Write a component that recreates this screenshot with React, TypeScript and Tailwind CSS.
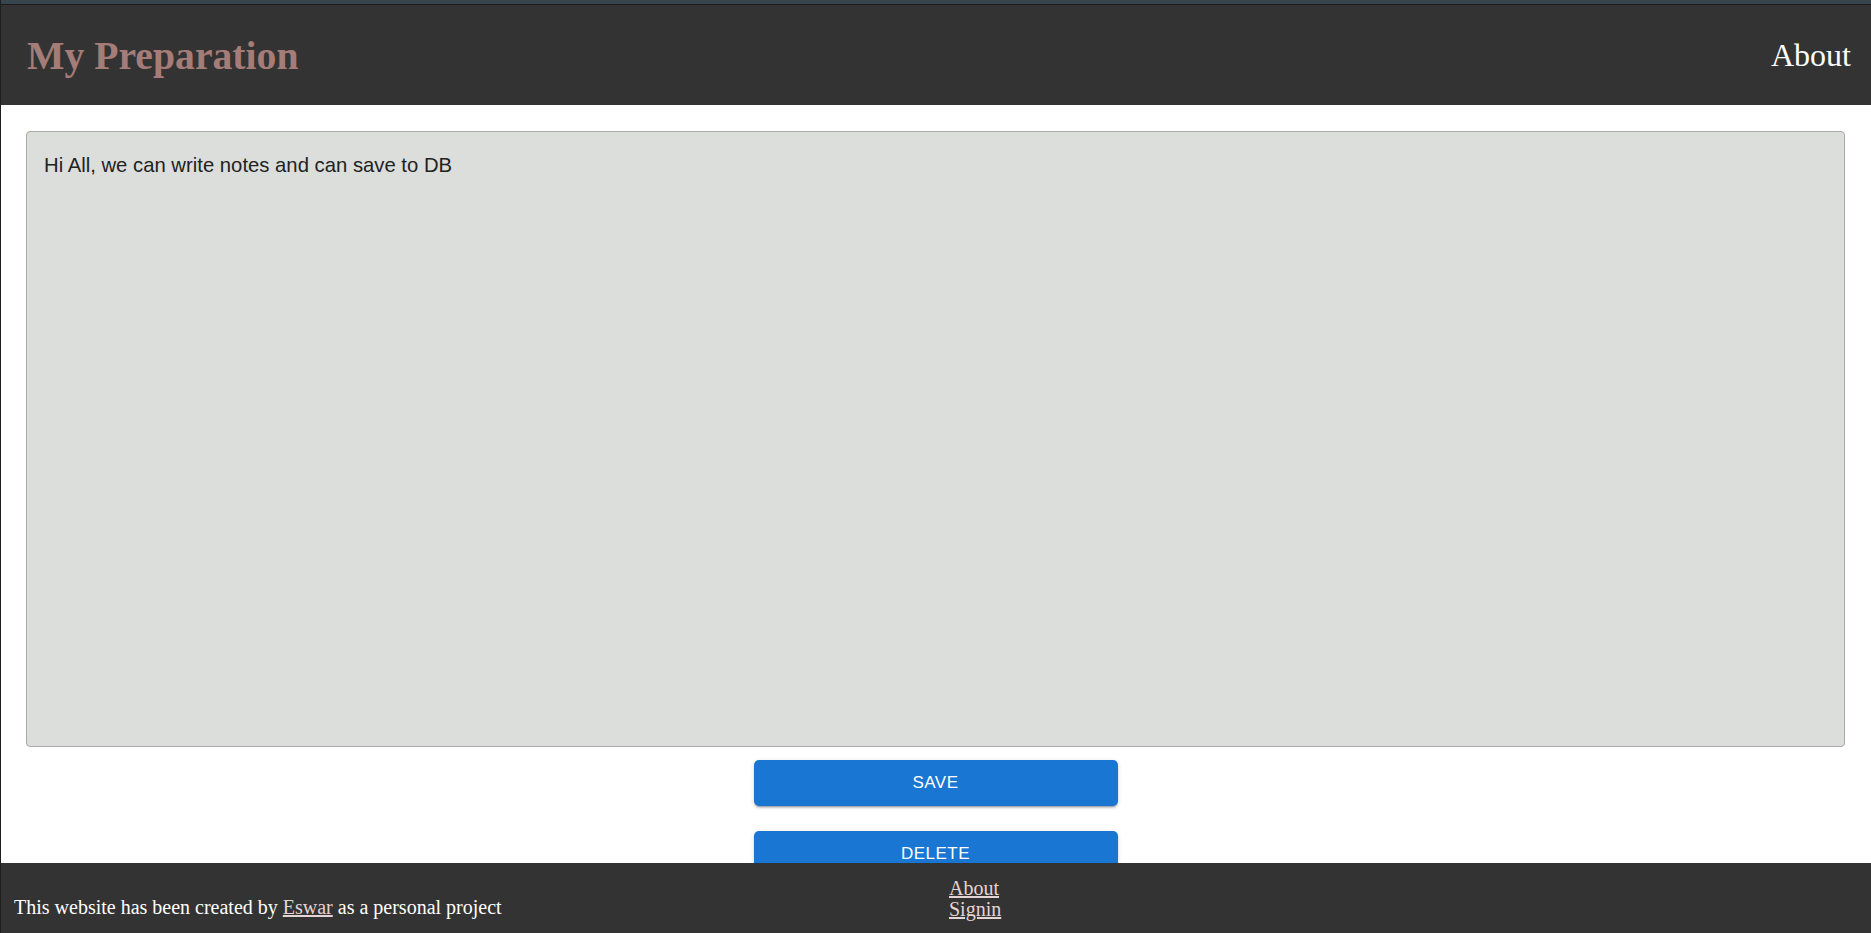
import React from "react";

export default function App() {
  return (
    <div className="relative h-[933px] overflow-hidden bg-white border-l border-[#1f1f1f] font-['Liberation_Serif',serif]">
      <div className="h-[4px] bg-[#37454f]" />
      <div className="h-px bg-[#1c1c1c]" />
      <header className="h-[100px] bg-[#333333] flex items-center justify-between pl-[26px] pr-[20px]">
        <h1 className="mt-[3px] text-[39.7px] font-bold text-[#a47c78] leading-normal">My Preparation</h1>
        <a href="#" className="text-[32px] text-white leading-normal">About</a>
      </header>
      <main className="flex flex-col items-center pl-[25px] pr-[26px] pt-[26px]">
        <textarea
          defaultValue="Hi All, we can write notes and can save to DB"
          className="block w-full h-[616px] resize-none bg-[#dcdedb] border border-[#a9a9a9] rounded-[4px] pt-[18px] px-[17px] text-[20.3px] leading-[1.5] text-[#222222] font-['Liberation_Sans',Arial,sans-serif] outline-none"
        />
        <button className="mt-[13px] w-[364px] h-[46px] rounded-[5px] bg-[#1976d2] text-white text-[17px] tracking-[0.03em] uppercase font-['Liberation_Sans',Arial,sans-serif] shadow-[0px_3px_1px_-2px_rgba(0,0,0,0.2),0px_2px_2px_0px_rgba(0,0,0,0.14),0px_1px_5px_0px_rgba(0,0,0,0.12)]">
          SAVE
        </button>
        <button className="mt-[25px] w-[364px] h-[46px] rounded-[5px] bg-[#1976d2] text-white text-[17px] tracking-[0.03em] uppercase font-['Liberation_Sans',Arial,sans-serif] shadow-[0px_3px_1px_-2px_rgba(0,0,0,0.2),0px_2px_2px_0px_rgba(0,0,0,0.14),0px_1px_5px_0px_rgba(0,0,0,0.12)]">
          DELETE
        </button>
      </main>
      <footer className="absolute bottom-0 left-0 right-0 h-[70px] bg-[#333333] grid grid-cols-[948px_1fr] items-end text-[20px] text-white">
        <p className="pl-[13px] pb-[15px] leading-[21px]">
          This website has been created by{" "}
          <a href="#" className="underline text-[#e6d3d3]">Eswar</a> as a personal project
        </p>
        <div className="flex flex-col items-start pb-[13px] leading-[21px]">
          <a href="#" className="underline text-[#e6d3d3]">About</a>
          <a href="#" className="underline text-[#e6d3d3]">Signin</a>
        </div>
      </footer>
    </div>
  );
}
